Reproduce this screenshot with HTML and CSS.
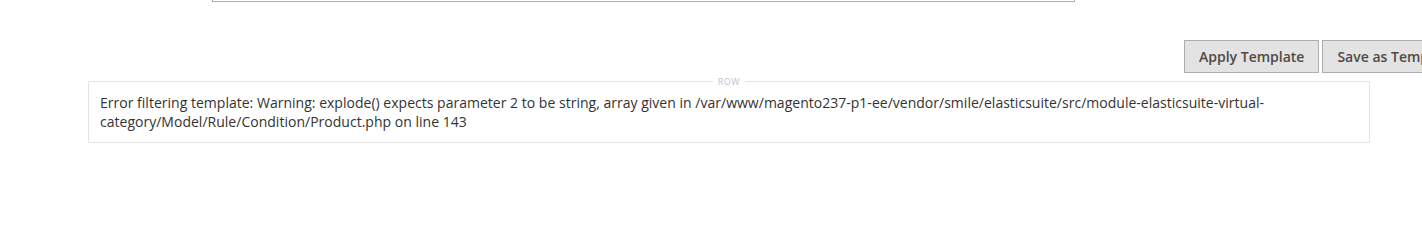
FILE: index.html
```html
<!DOCTYPE html>
<html>
<head>
<meta charset="utf-8">
<link rel="stylesheet" href="styles.css">
</head>
<body>
<div class="page">
  <div class="top-field"></div>
  <div class="actions">
    <button class="btn">Apply Template</button>
    <button class="btn">Save as Template</button>
  </div>
  <div class="row-box">
    <span class="row-label">Row</span>
    <div class="row-text">Error filtering template: Warning: explode() expects parameter 2 to be string, array given in /var/www/magento237-p1-ee/vendor/smile/elasticsuite/src/module-elasticsuite-virtual-category/Model/Rule/Condition/Product.php on line 143</div>
  </div>
</div>
</body>
</html>
```
FILE: styles.css
```css
html, body {
  margin: 0;
  padding: 0;
  background: #fff;
  overflow: hidden;
}
.page {
  width: 1422px;
  height: 248px;
  font-family: "Open Sans", "Liberation Sans", sans-serif;
  color: #333;
}
.top-field {
  margin-left: 212px;
  width: 861px;
  height: 1px;
  border: 1px solid #adadad;
  border-top: 0;
}
.actions {
  display: flex;
  gap: 3px;
  padding-left: 1184px;
  margin-top: 38px;
  white-space: nowrap;
  overflow: hidden;
}
.btn {
  flex: none;
  height: 33px;
  padding: 0 14px;
  background: #e3e3e3;
  border: 1px solid #adadad;
  border-radius: 0;
  color: #514943;
  font-family: "Open Sans", "Liberation Sans", sans-serif;
  font-size: 14px;
  font-weight: 600;
  line-height: 19px;
}
.row-box {
  position: relative;
  margin: 8px 0 0 88px;
  width: 1258px;
  border: 1px solid #e3e3e3;
  padding: 11px 11px 11px 11px;
}
.row-label {
  position: absolute;
  top: -6px;
  left: 50%;
  transform: translateX(-50%);
  background: #fff;
  padding: 0 5px;
  font-size: 9px;
  line-height: 11px;
  letter-spacing: 0.5px;
  text-transform: uppercase;
  color: #bfc3cc;
}
.row-text {
  font-size: 14px;
  line-height: 19px;
  letter-spacing: 0.015px;
  color: #333;
}
```
